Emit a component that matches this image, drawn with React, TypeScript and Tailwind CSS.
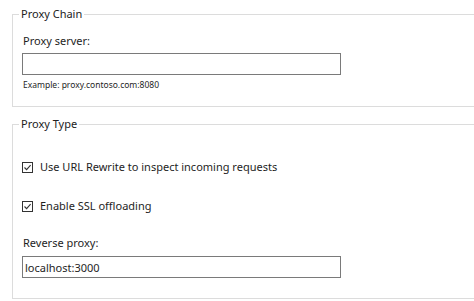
import React from "react";

const font = { fontFamily: '"Noto Sans", "Open Sans", sans-serif' };

// Windows-style check box: thin dark square with a tick
const CheckBox = () => (
  <span className="inline-flex h-[11px] w-[11px] shrink-0 items-center justify-center border border-[#333333] bg-white">
    <svg width="9" height="9" viewBox="0 0 9 9" fill="none">
      <path d="M1.5 4.5 L3.6 6.6 L7.6 2.2" stroke="#333333" strokeWidth="1.1" />
    </svg>
  </span>
);

const App = () => {
  return (
    <div
      className="h-[301px] w-[474px] overflow-hidden bg-white pl-[12px] pt-[6px] text-[11px] text-[#1e1e1e]"
      style={font}
    >
      {/* Proxy Chain group */}
      <fieldset className="w-[470px] border border-[#dcdcdc] px-[9px] pb-[15px]">
        <legend className="-ml-[3px] px-[2px] leading-[16px] text-[#222222]">Proxy Chain</legend>
        <div className="mt-[11px] pl-[1px] leading-[16px]">Proxy server:</div>
        <input
          className="mt-[4px] block h-[22px] w-[319px] border border-[#7a7a7a] bg-white px-[2px] outline-none"
          style={font}
        />
        <div className="mt-[4px] pl-[1px] text-[8.5px] leading-[12px]">Example: proxy.contoso.com:8080</div>
      </fieldset>

      {/* Proxy Type group */}
      <fieldset className="mt-[9px] w-[470px] border border-[#dcdcdc] px-[9px] pb-[20px]">
        <legend className="-ml-[3px] px-[2px] leading-[16px] text-[#222222]">Proxy Type</legend>
        <label className="mt-[27px] flex h-[16px] items-center gap-[7px]">
          <CheckBox />
          <span className="leading-[16px]">Use URL Rewrite to inspect incoming requests</span>
        </label>
        <label className="mt-[23px] flex h-[16px] items-center gap-[7px]">
          <CheckBox />
          <span className="leading-[16px]">Enable SSL offloading</span>
        </label>
        <div className="mt-[21px] pl-[1px] leading-[16px]">Reverse proxy:</div>
        <input
          className="mt-[5px] block h-[22px] w-[319px] border border-[#7a7a7a] bg-white px-[2px] text-[11px] text-[#1e1e1e] outline-none"
          style={font}
          defaultValue="localhost:3000"
        />
      </fieldset>
    </div>
  );
};

export default App;
